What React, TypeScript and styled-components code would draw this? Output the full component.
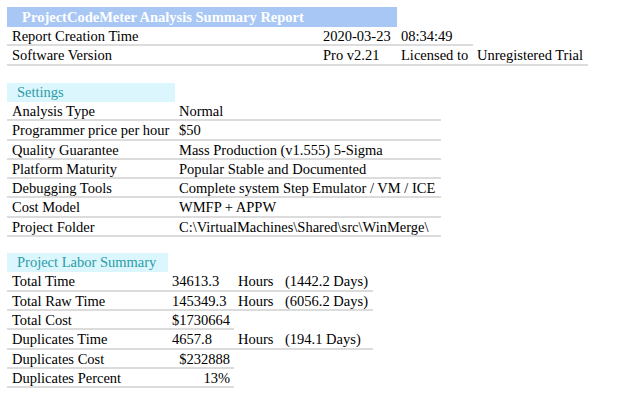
import React from "react"
import styled, { createGlobalStyle } from "styled-components"

const GlobalStyle = createGlobalStyle`
    body {
        margin: 0;
        background: #ffffff;
        font-family: "Liberation Serif", "Times New Roman", serif;
        font-size: 14.5px;
        color: #000000;
    }
`

const Page = styled.div`
    padding: 7px;
    display: flex;
    flex-direction: column;
    align-items: flex-start;
`

const Table = styled.table<{ $gap?: number }>`
    border-collapse: collapse;
    table-layout: fixed;
    margin-bottom: ${({ $gap }) => $gap ?? 0}px;
`

const Col = styled.col<{ $w: number }>`
    width: ${({ $w }) => $w}px;
`

const TitleCell = styled.th`
    background: #a8c7f5;
    color: #ffffff;
    font-weight: bold;
    text-align: center;
    line-height: 20px;
    padding: 0 4px;
    white-space: nowrap;
`

const SectionCell = styled.th`
    background: #dbf6fc;
    color: #2b9ca9;
    font-weight: normal;
    text-align: left;
    line-height: 19.4px;
    padding: 0 10px;
    white-space: nowrap;
`

const Cell = styled.td<{ $right?: boolean }>`
    border-bottom: 2px solid #dcdcdc;
    line-height: 16.3px;
    padding: 1px 4px 0 4px;
    text-align: ${({ $right }) => ($right ? "right" : "left")};
    white-space: nowrap;
    &:first-child {
        padding-left: 5px;
    }
`

type Row = { cells: string[]; right?: boolean }

const settings: [string, string][] = [
    ["Analysis Type", "Normal"],
    ["Programmer price per hour", "$50"],
    ["Quality Guarantee", "Mass Production (v1.555) 5-Sigma"],
    ["Platform Maturity", "Popular Stable and Documented"],
    ["Debugging Tools", "Complete system Step Emulator / VM / ICE"],
    ["Cost Model", "WMFP + APPW"],
    ["Project Folder", "C:\\VirtualMachines\\Shared\\src\\WinMerge\\"],
]

const labor: Row[] = [
    { cells: ["Total Time", "34613.3", "Hours", "(1442.2 Days)"] },
    { cells: ["Total Raw Time", "145349.3", "Hours", "(6056.2 Days)"] },
    { cells: ["Total Cost", "$1730664"] },
    { cells: ["Duplicates Time", "4657.8", "Hours", "(194.1 Days)"] },
    { cells: ["Duplicates Cost", "$232888"], right: true },
    { cells: ["Duplicates Percent", "13%"], right: true },
]

export default function App() {
    return (
        <>
            <GlobalStyle />
            <Page>
                <Table $gap={17}>
                    <colgroup>
                        <Col $w={312} />
                        <Col $w={78} />
                        <Col $w={76} />
                        <Col $w={115} />
                    </colgroup>
                    <thead>
                        <tr>
                            <TitleCell>ProjectCodeMeter Analysis Summary Report</TitleCell>
                            <TitleCell />
                        </tr>
                    </thead>
                    <tbody>
                        <tr>
                            <Cell>Report Creation Time</Cell>
                            <Cell>2020-03-23</Cell>
                            <Cell>08:34:49</Cell>
                        </tr>
                        <tr>
                            <Cell>Software Version</Cell>
                            <Cell>Pro v2.21</Cell>
                            <Cell>Licensed to</Cell>
                            <Cell>Unregistered Trial</Cell>
                        </tr>
                    </tbody>
                </Table>

                <Table $gap={16}>
                    <colgroup>
                        <Col $w={168} />
                        <Col $w={266} />
                    </colgroup>
                    <thead>
                        <tr>
                            <SectionCell>Settings</SectionCell>
                        </tr>
                    </thead>
                    <tbody>
                        {settings.map(([label, value]) => (
                            <tr key={label}>
                                <Cell>{label}</Cell>
                                <Cell>{value}</Cell>
                            </tr>
                        ))}
                    </tbody>
                </Table>

                <Table>
                    <colgroup>
                        <Col $w={161} />
                        <Col $w={65} />
                        <Col $w={47} />
                        <Col $w={92} />
                    </colgroup>
                    <thead>
                        <tr>
                            <SectionCell>Project Labor Summary</SectionCell>
                        </tr>
                    </thead>
                    <tbody>
                        {labor.map(row => (
                            <tr key={row.cells[0]}>
                                {row.cells.map((text, i) => (
                                    <Cell key={i} $right={row.right && i === 1}>
                                        {text}
                                    </Cell>
                                ))}
                            </tr>
                        ))}
                    </tbody>
                </Table>
            </Page>
        </>
    )
}
